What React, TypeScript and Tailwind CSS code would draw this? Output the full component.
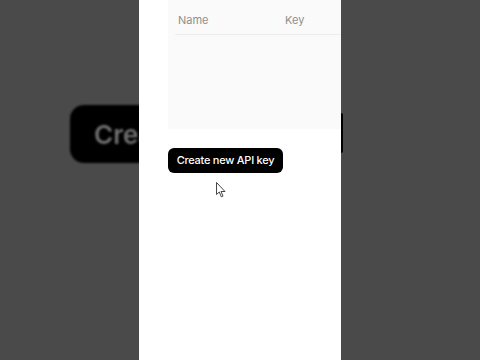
export default function App() {
  return (
    <div className="relative flex w-[480px] h-[360px] bg-[#4a4a4a] overflow-hidden" style={{ fontFamily: "Inter, 'Liberation Sans', sans-serif" }}>
      {/* blurred background, left */}
      <div className="w-[139px] shrink-0 overflow-hidden pt-[105px] pl-[70px]">
        <div className="flex items-center h-[58px] w-[160px] rounded-[14px] bg-black pl-[24px] blur-[1px]">
          <span className="text-[26px] font-semibold text-[#707070] whitespace-nowrap">Create</span>
        </div>
      </div>

      {/* center column */}
      <div className="w-[202px] shrink-0 bg-white">
        <div className="ml-[29px] h-[129px] bg-[#fafafa]">
          <div className="flex h-[34px] items-center pl-[10px] pt-[7px] text-[11px] text-[#8f8f8f]">
            <span className="w-[107px]">Name</span>
            <span>Key</span>
          </div>
          <div className="ml-[7px] h-[1px] bg-[#ececec]" />
        </div>
        <button className="ml-[29px] mt-[19px] h-[25px] w-[115px] rounded-[6px] bg-black text-[11px] font-medium tracking-[-0.25px] text-white">
          Create new API key
        </button>
      </div>

      {/* right */}
      <div className="flex-1 pt-[113px]">
        <div className="w-[2px] h-[40px] bg-black rounded-r" />
      </div>

      {/* cursor */}
      <svg className="absolute left-[216px] top-[182px]" width="10" height="16" viewBox="0 0 10 16">
        <path d="M0.5 0.5 L0.5 12.5 L3.3 10 L5.3 14.8 L7 14.1 L5 9.5 L9 9.5 Z" fill="white" stroke="#333" strokeWidth="0.9" strokeLinejoin="round" />
      </svg>
    </div>
  )
}
